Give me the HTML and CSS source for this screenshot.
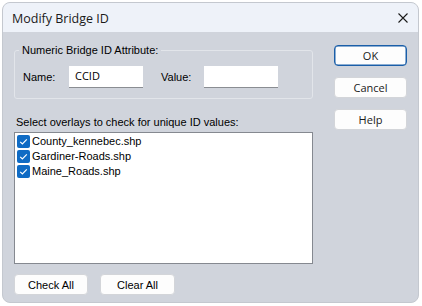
FILE: index.html
```html
<!DOCTYPE html>
<html>
<head>
<meta charset="utf-8">
<link rel="stylesheet" href="styles.css">
</head>
<body>
<div class="window">
  <div class="titlebar">
    <span class="title">Modify Bridge ID</span>
    <svg class="close" width="10" height="10" viewBox="0 0 10 10"><path d="M0.5 0.5L9.5 9.5M9.5 0.5L0.5 9.5" stroke="#1b1b1b" stroke-width="1.1" fill="none"/></svg>
  </div>
  <div class="content">
    <div class="main">
      <div class="group">
        <span class="legend">Numeric Bridge ID Attribute:</span>
        <div class="row">
          <span class="lbl lbl-name">Name:</span>
          <div class="input input-name">CCID</div>
          <span class="lbl lbl-value">Value:</span>
          <div class="input input-value"></div>
        </div>
      </div>
      <div class="list-label">Select overlays to check for unique ID values:</div>
      <div class="list">
        <div class="item"><span class="check"><svg width="13" height="13" viewBox="0 0 13 13"><path d="M3.2 6.8L5.4 9L9.8 4.4" stroke="#fff" stroke-width="1.2" fill="none"/></svg></span>County_kennebec.shp</div>
        <div class="item"><span class="check"><svg width="13" height="13" viewBox="0 0 13 13"><path d="M3.2 6.8L5.4 9L9.8 4.4" stroke="#fff" stroke-width="1.2" fill="none"/></svg></span>Gardiner-Roads.shp</div>
        <div class="item"><span class="check"><svg width="13" height="13" viewBox="0 0 13 13"><path d="M3.2 6.8L5.4 9L9.8 4.4" stroke="#fff" stroke-width="1.2" fill="none"/></svg></span>Maine_Roads.shp</div>
      </div>
      <div class="bottom-buttons">
        <div class="btn btn-check">Check All</div>
        <div class="btn btn-clear">Clear All</div>
      </div>
    </div>
    <div class="side">
      <div class="btn btn-side btn-default">OK</div>
      <div class="btn btn-side">Cancel</div>
      <div class="btn btn-side">Help</div>
    </div>
  </div>
</div>
</body>
</html>
```
FILE: styles.css
```css
html, body {
  margin: 0;
  padding: 0;
  background: #ffffff;
}
body {
  font-family: "Liberation Sans", Arial, sans-serif;
  font-size: 11px;
  color: #000;
}
.window {
  margin: 2px 0 0 2px;
  width: 415px;
  height: 299px;
  border: 1px solid #c4c8cf;
  border-radius: 8px;
  overflow: hidden;
  background: #d0d4dc;
}
.titlebar {
  height: 29px;
  background: #eef2f9;
  display: flex;
  align-items: center;
  justify-content: space-between;
  padding: 0 10px 0 9px;
}
.title {
  font-family: "Open Sans", "Noto Sans", sans-serif;
  font-size: 12.5px;
  color: #1a1a1a;
  margin-top: 1px;
}
.close {
  display: block;
  margin-top: 1px;
}
.content {
  display: flex;
  gap: 21px;
  padding: 0 11px;
}
.main {
  width: 299px;
  padding-top: 18px;
}
.group {
  position: relative;
  height: 47px;
  border: 1px solid #e2e5ea;
  border-radius: 3px;
}
.legend {
  position: absolute;
  left: 4px;
  top: -7px;
  padding: 0 3px;
  background: #d0d4dc;
  line-height: 13px;
}
.row {
  display: flex;
  align-items: center;
  padding: 15px 0 0 8px;
}
.lbl {
  line-height: 13px;
}
.lbl-name {
  width: 46px;
}
.lbl-value {
  margin-left: 18px;
  width: 43px;
}
.input {
  box-sizing: border-box;
  height: 22px;
  background: #fff;
  border-bottom: 1px solid #8a8d92;
  padding: 3px 0 0 6px;
  font-family: "Open Sans", "Noto Sans", sans-serif;
  font-size: 11px;
  line-height: 14px;
}
.input-name {
  width: 74px;
}
.input-value {
  width: 74px;
}
.list-label {
  margin-top: 17px;
  padding-left: 2px;
  line-height: 13px;
}
.list {
  box-sizing: border-box;
  margin-top: 3px;
  height: 132px;
  background: #fff;
  border: 1px solid #858990;
  padding: 1px 0 0 2px;
}
.item {
  display: flex;
  align-items: center;
  height: 15px;
  line-height: 15px;
}
.check {
  width: 13px;
  height: 13px;
  background: #0f6bc4;
  border-radius: 2px;
  margin-right: 2px;
  display: flex;
}
.check svg {
  display: block;
}
.bottom-buttons {
  display: flex;
  gap: 12px;
  margin-top: 10px;
}
.btn {
  box-sizing: border-box;
  height: 21px;
  background: #fdfdfd;
  border: 1px solid #d3d5d9;
  border-radius: 4px;
  display: flex;
  align-items: center;
  justify-content: center;
}
.btn-check {
  width: 74px;
}
.btn-clear {
  width: 75px;
}
.side {
  width: 73px;
  padding-top: 13px;
  display: flex;
  flex-direction: column;
  gap: 11px;
}
.btn-side {
  height: 21px;
  font-family: "Open Sans", "Noto Sans", sans-serif;
  font-size: 11px;
  color: #1a1a1a;
}
.btn-default {
  border: 1px solid #1a5ea8;
  box-shadow: inset 0 0 0 0.5px #1a5ea8;
}
```
